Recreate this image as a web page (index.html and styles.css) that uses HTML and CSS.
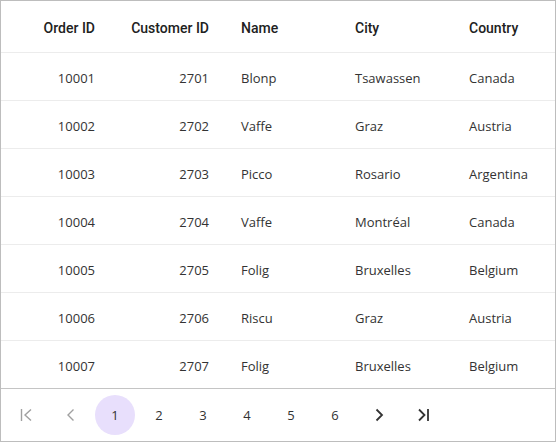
FILE: index.html
```html
<!DOCTYPE html>
<html>
<head>
<meta charset="utf-8">
<link rel="stylesheet" href="styles.css">
</head>
<body>
<div class="grid">
  <div class="table">
    <div class="row head">
      <div class="cell num">Order ID</div>
      <div class="cell num">Customer ID</div>
      <div class="cell">Name</div>
      <div class="cell">City</div>
      <div class="cell">Country</div>
    </div>
    <div class="row"><div class="cell num">10001</div><div class="cell num">2701</div><div class="cell">Blonp</div><div class="cell">Tsawassen</div><div class="cell">Canada</div></div>
    <div class="row"><div class="cell num">10002</div><div class="cell num">2702</div><div class="cell">Vaffe</div><div class="cell">Graz</div><div class="cell">Austria</div></div>
    <div class="row"><div class="cell num">10003</div><div class="cell num">2703</div><div class="cell">Picco</div><div class="cell">Rosario</div><div class="cell">Argentina</div></div>
    <div class="row"><div class="cell num">10004</div><div class="cell num">2704</div><div class="cell">Vaffe</div><div class="cell">Montréal</div><div class="cell">Canada</div></div>
    <div class="row"><div class="cell num">10005</div><div class="cell num">2705</div><div class="cell">Folig</div><div class="cell">Bruxelles</div><div class="cell">Belgium</div></div>
    <div class="row"><div class="cell num">10006</div><div class="cell num">2706</div><div class="cell">Riscu</div><div class="cell">Graz</div><div class="cell">Austria</div></div>
    <div class="row last"><div class="cell num">10007</div><div class="cell num">2707</div><div class="cell">Folig</div><div class="cell">Bruxelles</div><div class="cell">Belgium</div></div>
  </div>
  <div class="pager">
    <div class="pbtn disabled"><svg width="16" height="16" viewBox="0 0 16 16"><path d="M2.5 2v12M12 2.5L6 8l6 5.5" fill="none" stroke="currentColor" stroke-width="1.4"/></svg></div>
    <div class="pbtn disabled"><svg width="16" height="16" viewBox="0 0 16 16"><path d="M10.5 2.5L5 8l5.5 5.5" fill="none" stroke="currentColor" stroke-width="1.4"/></svg></div>
    <div class="pbtn active">1</div>
    <div class="pbtn">2</div>
    <div class="pbtn">3</div>
    <div class="pbtn">4</div>
    <div class="pbtn">5</div>
    <div class="pbtn">6</div>
    <div class="pbtn"><svg width="16" height="16" viewBox="0 0 16 16"><path d="M5.5 2.5L11 8l-5.5 5.5" fill="none" stroke="currentColor" stroke-width="1.8"/></svg></div>
    <div class="pbtn"><svg width="16" height="16" viewBox="0 0 16 16"><path d="M4 2.5L9.5 8 4 13.5M13 2v12" fill="none" stroke="currentColor" stroke-width="1.8"/></svg></div>
  </div>
</div>
</body>
</html>
```
FILE: styles.css
```css
html, body {
  margin: 0;
  padding: 0;
  background: #fff;
}
.grid {
  width: 556px;
  height: 442px;
  box-sizing: border-box;
  border: 1px solid #bdbdbd;
  display: flex;
  flex-direction: column;
  font-family: "Open Sans", "Noto Sans", sans-serif;
  color: #333;
}
.table {
  display: flex;
  flex-direction: column;
}
.row {
  display: grid;
  grid-template-columns: 110px 114px 114px 114px 1fr;
  height: 47px;
  border-bottom: 1px solid #ececec;
  font-size: 13px;
}
.row.head {
  height: 51px;
  font-family: Roboto, sans-serif;
  font-weight: 500;
  font-size: 14px;
  color: #212121;
}
.row.last {
  border-bottom: 1px solid #c4c4c4;
}
.cell {
  display: flex;
  align-items: center;
  padding: 2px 16px 0;
  white-space: nowrap;
}
.cell.num {
  justify-content: flex-end;
}
.pager {
  flex: 1;
  display: flex;
  align-items: center;
  padding-left: 4px;
  font-family: "Open Sans", "Noto Sans", sans-serif;
  font-size: 13px;
  color: #212121;
}
.pbtn {
  width: 40px;
  height: 40px;
  margin: 0 2px;
  border-radius: 50%;
  display: flex;
  align-items: center;
  justify-content: center;
  color: #333;
}
.pbtn.disabled {
  color: #a0a0a0;
}
.pbtn.active {
  background: #e8dffc;
}
.pbtn svg {
  display: block;
}
```
